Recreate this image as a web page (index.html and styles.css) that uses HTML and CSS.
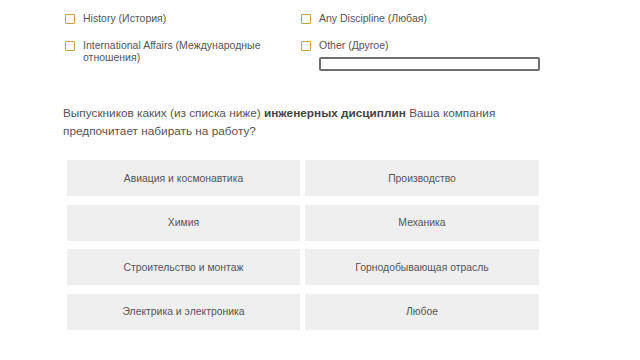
FILE: index.html
```html
<!DOCTYPE html>
<html lang="ru">
<head>
    <meta charset="UTF-8">
    <meta name="viewport" content="width=device-width, initial-scale=1.0">
    <title>Анкета работодателя</title>
    <link rel="stylesheet" href="styles.css">
</head>
<body>
    <div class="container">
        <!-- выбор дисциплин (чекбоксы) -->
        <section class="check-grid">
            <label class="check-item">
                <span class="box"></span>
                <span class="check-text">History (История)</span>
            </label>
            <label class="check-item">
                <span class="box"></span>
                <span class="check-text">Any Discipline (Любая)</span>
            </label>
            <label class="check-item">
                <span class="box"></span>
                <span class="check-text">International Affairs (Международные отношения)</span>
            </label>
            <div class="check-item">
                <span class="box"></span>
                <div class="check-body">
                    <span class="check-text">Other (Другое)</span>
                    <input class="other-input" type="text">
                </div>
            </div>
        </section>

        <!-- вопрос -->
        <p class="question">
            Выпускников каких (из списка ниже) <strong>инженерных дисциплин</strong> Ваша компания предпочитает набирать на работу?
        </p>

        <!-- варианты ответа -->
        <section class="options">
            <div class="option">Авиация и космонавтика</div>
            <div class="option">Производство</div>
            <div class="option">Химия</div>
            <div class="option">Механика</div>
            <div class="option">Строительство и монтаж</div>
            <div class="option">Горнодобывающая отрасль</div>
            <div class="option">Электрика и электроника</div>
            <div class="option">Любое</div>
        </section>
    </div>
</body>
</html>
```

FILE: styles.css
```css
/* общие стили */
body {
    margin: 0;
    background-color: #FFFFFF;
    font-family: 'Liberation Sans', Arial, sans-serif;
    color: #555555;
}

.container {
    width: 480px;
    padding: 12px 0 0 63px;
}

/* чекбоксы */
.check-grid {
    display: grid;
    grid-template-columns: 236px 236px;
    row-gap: 15px;
    padding-left: 2px;
}

.check-item {
    display: flex;
    align-items: flex-start;
    font-size: 10.5px;
    line-height: 12px;
}

.box {
    flex: none;
    width: 8px;
    height: 8px;
    margin: 2px 8px 0 0;
    border: 1.5px solid #C9A03C;
    border-radius: 1px;
}

.check-text {
    display: block;
    padding-right: 10px;
}

.check-body {
    flex: 1;
}

.other-input {
    display: block;
    box-sizing: border-box;
    width: 221px;
    height: 14px;
    margin-top: 6px;
    border: 2px solid #6E6E6E;
    border-radius: 2px;
    padding: 0;
    background: #FFFFFF;
}

/* вопрос */
.question {
    margin: 33px 0 0;
    font-size: 11.8px;
    line-height: 18px;
    color: #555555;
}

.question strong {
    color: #444444;
}

/* варианты */
.options {
    display: grid;
    grid-template-columns: 233px 234px;
    grid-auto-rows: 36px;
    column-gap: 5px;
    row-gap: 8.5px;
    margin: 20px 0 0 4px;
}

.option {
    display: flex;
    align-items: center;
    justify-content: center;
    background-color: #EFEFEF;
    font-size: 10.4px;
    color: #555555;
}
```
